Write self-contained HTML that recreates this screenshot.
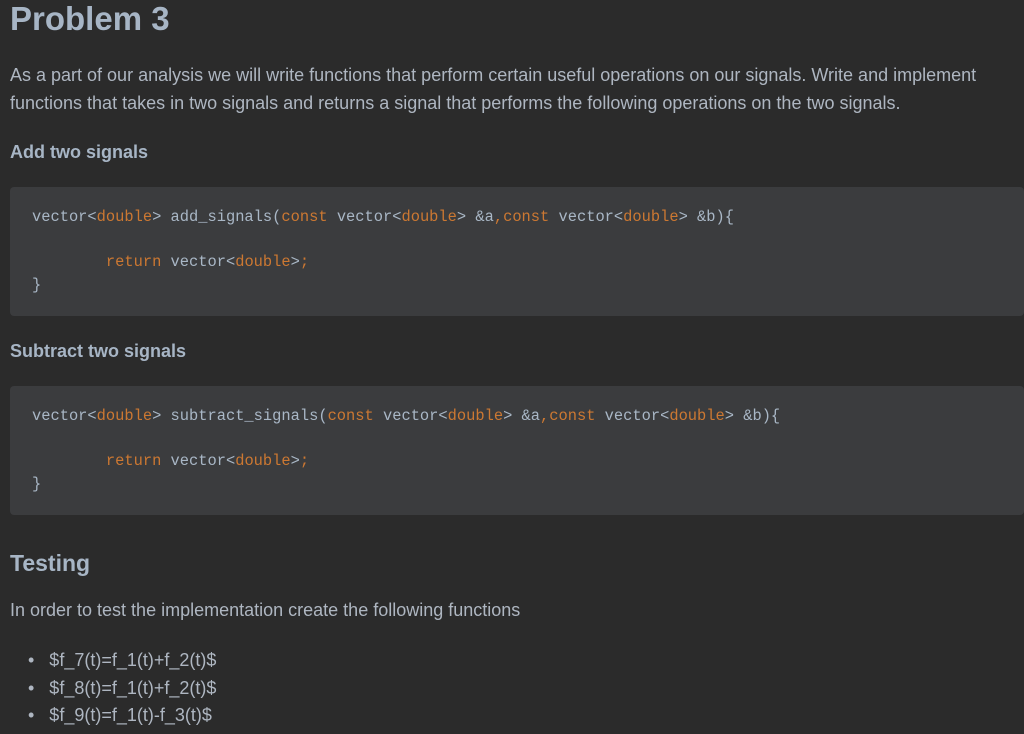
<!DOCTYPE html>
<html><head><meta charset="utf-8"><style>
body{margin:0;background:#2b2b2b;width:1024px;height:734px;overflow:hidden;font-family:"Liberation Sans",Arial,sans-serif;color:#aeb6c1;position:relative}
.a{position:absolute;white-space:nowrap}
h1,h3,h2{margin:0;font-weight:bold;color:#a7b5c5}
.p{font-size:18px}
.code{position:absolute;left:10px;width:1014px;height:129px;background:#3b3c3e;border-radius:4px}
.code pre{margin:0;position:absolute;left:22px;top:19px;font-family:"Liberation Mono","DejaVu Sans Mono",monospace;font-size:15.4px;line-height:22.5px;color:#a9b7c6}
.o{color:#cc7832}
</style></head><body>
<h1 class="a" style="left:10px;top:0px;font-size:33px;line-height:38px">Problem 3</h1>
<div class="a p" style="left:10px;top:61px;line-height:28px">As a part of our analysis we will write functions that perform certain useful operations on our signals. Write and implement<br>functions that takes in two signals and returns a signal that performs the following operations on the two signals.</div>
<h3 class="a" style="left:10px;top:141px;font-size:18px;line-height:22px">Add two signals</h3>
<div class="code" style="top:187px"><pre>vector&lt;<span class="o">double</span>&gt; add_signals(<span class="o">const</span> vector&lt;<span class="o">double</span>&gt; &amp;a<span class="o">,const</span> vector&lt;<span class="o">double</span>&gt; &amp;b){

        <span class="o">return</span> vector&lt;<span class="o">double</span>&gt;<span class="o">;</span>
}</pre></div>
<h3 class="a" style="left:10px;top:340px;font-size:18px;line-height:22px">Subtract two signals</h3>
<div class="code" style="top:386px"><pre>vector&lt;<span class="o">double</span>&gt; subtract_signals(<span class="o">const</span> vector&lt;<span class="o">double</span>&gt; &amp;a<span class="o">,const</span> vector&lt;<span class="o">double</span>&gt; &amp;b){

        <span class="o">return</span> vector&lt;<span class="o">double</span>&gt;<span class="o">;</span>
}</pre></div>
<h2 class="a" style="left:10px;top:548px;font-size:23px;line-height:30px">Testing</h2>
<div class="a p" style="left:10px;top:599px;line-height:22px">In order to test the implementation create the following functions</div>
<div class="a p" style="left:28px;top:647px;line-height:27.5px">
<div>•&nbsp;&nbsp;&nbsp;$f_7(t)=f_1(t)+f_2(t)$</div>
<div>•&nbsp;&nbsp;&nbsp;$f_8(t)=f_1(t)+f_2(t)$</div>
<div>•&nbsp;&nbsp;&nbsp;$f_9(t)=f_1(t)-f_3(t)$</div>
</div>
</body></html>
